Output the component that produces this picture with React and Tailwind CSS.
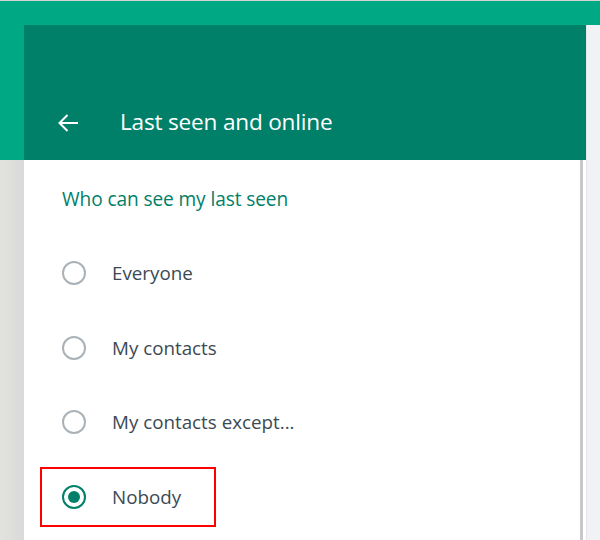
import React, { useState } from 'react';

const options = ['Everyone', 'My contacts', 'My contacts except...', 'Nobody'];

function Radio({ checked }) {
  return (
    <span
      className={
        'flex h-6 w-6 shrink-0 items-center justify-center rounded-full border-2 ' +
        (checked ? 'border-[#008069]' : 'border-[#aab2b7]')
      }
    >
      {checked && <span className="h-3 w-3 rounded-full bg-[#008069]" />}
    </span>
  );
}

export default function App() {
  const [selected, setSelected] = useState('Nobody');

  return (
    <div
      className="flex h-[540px] w-[600px] flex-col overflow-hidden border-t border-[#d4d4d4] bg-[#f0f2f5]"
      style={{ fontFamily: '"Open Sans", "Noto Sans", sans-serif' }}
    >
      <div className="h-6 shrink-0 bg-[#00a884]" />
      <div className="flex min-h-0 flex-1">
        {/* left backdrop */}
        <div className="flex w-6 shrink-0 flex-col">
          <div className="h-[135px] bg-[#00a884]" />
          <div className="flex-1 bg-gradient-to-r from-[#e3e2de] to-[#d9dad9]" />
        </div>

        {/* settings panel */}
        <div className="flex w-[562px] shrink-0 flex-col bg-white">
          <div className="flex h-[135px] shrink-0 items-end bg-[#008069] pb-[25px] text-white">
            <button className="ml-[34px] flex h-6 w-[20px] items-center justify-center">
              <svg width="20" height="18" viewBox="0 0 20 18" fill="none" stroke="white" strokeWidth="2">
                <path d="M20 9H1.5M9.5 1 1.5 9l8 8" />
              </svg>
            </button>
            <h1 className="ml-[42px] -translate-y-[1px] text-[22.6px] leading-6 tracking-[-0.2px]">Last seen and online</h1>
          </div>

          <div className="flex min-h-0 flex-1">
            <div className="flex-1 pl-[38px] pt-[27px]">
              <h2 className="text-[19.1px] leading-6 tracking-[-0.1px] text-[#008069]">Who can see my last seen</h2>
              <ul className="mt-[50px] flex flex-col gap-[50.5px]">
                {options.map((opt) => (
                  <li key={opt}>
                    <label
                      className="relative flex cursor-pointer items-center gap-[26px] text-[18.8px] leading-6 text-[#3b4a54]"
                      onClick={() => setSelected(opt)}
                    >
                      <Radio checked={selected === opt} />
                      <span>{opt}</span>
                      {opt === 'Nobody' && (
                        <span className="pointer-events-none absolute -left-[22px] -top-[18px] h-[60px] w-[176px] border-2 border-[#ff0000]" />
                      )}
                    </label>
                  </li>
                ))}
              </ul>
            </div>
            {/* scrollbar */}
            <div className="mr-[3px] w-[3px] bg-[#c8c8c8]" />
          </div>
        </div>

        {/* right backdrop */}
        <div className="flex-1 border-l border-[#e4e6ea] bg-[#f0f2f5]" />
      </div>
    </div>
  );
}
